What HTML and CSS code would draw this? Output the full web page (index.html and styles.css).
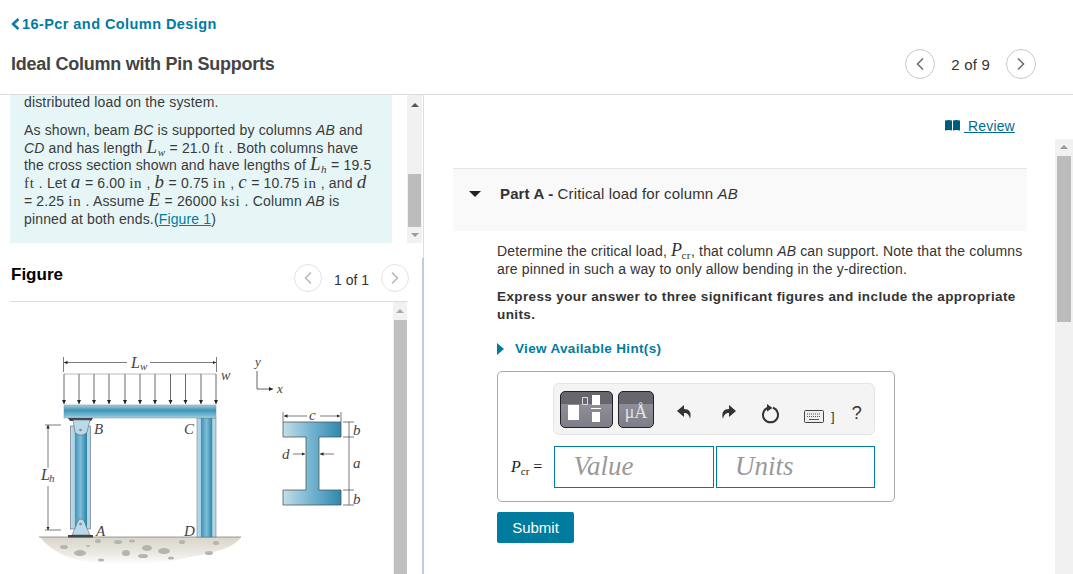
FILE: index.html
```html
<!DOCTYPE html>
<html lang="en">
<head>
<meta charset="utf-8">
<title>Ideal Column with Pin Supports</title>
<link rel="stylesheet" href="styles.css">
</head>
<body>
<div class="page">
  <header class="top">
    <a class="back"><svg class="back-ico" width="9" height="12" viewBox="0 0 9 12"><path d="M7.500 1 2 6l5.500 5" fill="none" stroke="#007c9f" stroke-width="2.400"/></svg>16-Pcr and Column Design</a>
    <div class="title-row">
      <h1>Ideal Column with Pin Supports</h1>
      <nav class="pager">
        <span class="circle"><svg width="10" height="14" viewBox="0 0 10 14"><path d="M8 1.500 2.500 7 8 12.500" fill="none" stroke="#666f7a" stroke-width="1.600"/></svg></span>
        <span class="count">2 of 9</span>
        <span class="circle"><svg width="10" height="14" viewBox="0 0 10 14"><path d="M2 1.500 7.500 7 2 12.500" fill="none" stroke="#666f7a" stroke-width="1.600"/></svg></span>
      </nav>
    </div>
  </header>
  <main class="main">
    <section class="left">
      <div class="intro">
        <div class="desc">
          <p class="first">distributed load on the system.</p>
          <p>As shown, beam <i>BC</i> is supported by columns <i>AB</i> and <i>CD</i> and has length <span class="m"><i>L</i><sub>w</sub></span> = 21.0 <span class="u">ft</span> . Both columns have the cross section shown and have lengths of <span class="m"><i>L</i><sub>h</sub></span> = 19.5 <span class="u">ft</span> . Let <span class="m"><i>a</i></span> = 6.00 <span class="u">in</span> , <span class="m"><i>b</i></span> = 0.75 <span class="u">in</span> , <span class="m"><i>c</i></span> = 10.75 <span class="u">in</span> , and <span class="m"><i>d</i></span> = 2.25 <span class="u">in</span> . Assume <span class="m"><i>E</i></span> = 26000 <span class="u">ksi</span> . Column <i>AB</i> is pinned at both ends.(<a class="lnk">Figure 1</a>)</p>
        </div>
        <div class="sbar sbar-intro">
          <span class="up"></span><span class="thumb"></span><span class="down"></span>
        </div>
      </div>
      <div class="fig-head">
        <h2>Figure</h2>
        <div class="fig-pager">
          <span class="circle soft"><svg width="10" height="14" viewBox="0 0 10 14"><path d="M8 1.500 2.500 7 8 12.500" fill="none" stroke="#b8b8b8" stroke-width="1.600"/></svg></span>
          <span class="count">1 of 1</span>
          <span class="circle soft"><svg width="10" height="14" viewBox="0 0 10 14"><path d="M2 1.500 7.500 7 2 12.500" fill="none" stroke="#b8b8b8" stroke-width="1.600"/></svg></span>
        </div>
      </div>
      <div class="fig-body">
        <svg class="diagram" width="383" height="272" viewBox="10 302 383 272">
          <defs>
            <linearGradient id="beam" x1="0" y1="0" x2="0" y2="1"><stop offset="0" stop-color="#a6d0e2"/><stop offset=".4" stop-color="#3e93b5"/><stop offset=".75" stop-color="#6fb3cf"/><stop offset="1" stop-color="#a9d3e4"/></linearGradient>
            <linearGradient id="col" x1="0" y1="0" x2="1" y2="0"><stop offset="0" stop-color="#bcdcea"/><stop offset=".2" stop-color="#a5d0e3"/><stop offset=".22" stop-color="#3f93b6"/><stop offset=".5" stop-color="#7dbdd6"/><stop offset=".8" stop-color="#2f86ab"/><stop offset=".82" stop-color="#b3d6e6"/><stop offset="1" stop-color="#b3d6e6"/></linearGradient>
            <linearGradient id="sec" x1="0" y1="0" x2="1" y2="0"><stop offset="0" stop-color="#c2dfeb"/><stop offset=".5" stop-color="#72b3cf"/><stop offset="1" stop-color="#2f88ad"/></linearGradient>
            <linearGradient id="gnd" x1="0" y1="0" x2="0" y2="1"><stop offset="0" stop-color="#d8d5ca"/><stop offset=".6" stop-color="#ebe9e2"/><stop offset="1" stop-color="#fff"/></linearGradient>
            <marker id="ah" markerWidth="6" markerHeight="6" refX="5" refY="2.500" orient="auto-start-reverse"><path d="M0 0 5 2.500 0 5z" fill="#222"/></marker>
          </defs>
          <g class="art">
            <path d="M40 537h201c-8 12-30 16-50 20-40 9-90 10-120 1-14-5-24-12-31-21z" fill="url(#gnd)"/>
            <g fill="#b4b4b0">
              <ellipse cx="80" cy="553" rx="6" ry="3"/><ellipse cx="64" cy="547" rx="4" ry="2"/><ellipse cx="98" cy="541" rx="3" ry="2"/><ellipse cx="118" cy="542" rx="4" ry="2"/><ellipse cx="126" cy="553" rx="4" ry="3"/><ellipse cx="147" cy="548" rx="5" ry="3"/><ellipse cx="164" cy="551" rx="6" ry="3"/><ellipse cx="143" cy="556" rx="5" ry="2"/><ellipse cx="182" cy="542" rx="3" ry="2"/><ellipse cx="209" cy="553" rx="4" ry="2"/><ellipse cx="216" cy="543" rx="3" ry="2"/><ellipse cx="101" cy="560" rx="3" ry="1.500"/><ellipse cx="171" cy="558" rx="3" ry="1.500"/><ellipse cx="132" cy="541" rx="3" ry="1.500"/><ellipse cx="88" cy="546" rx="2" ry="1"/>
            </g>
            <path d="M39 537h202" stroke="#777" stroke-width=".7"/>
            <rect x="197" y="418" width="19" height="119" fill="url(#col)" stroke="#667" stroke-width=".5"/>
            <rect x="70.500" y="426" width="20" height="103" fill="url(#col)" stroke="#667" stroke-width=".6"/>
            <rect x="64" y="405" width="152" height="13" fill="url(#beam)" stroke="#7b8f99" stroke-width=".5"/>
            <path d="M68 418h25l-2 3H70z" fill="#444"/>
            <path d="M73 420h17l-3 12q-2 3-5 3h-2q-3 0-5-3z" fill="#b9dbe9" stroke="#667" stroke-width=".6"/>
            <circle cx="80.500" cy="430" r="1.300" fill="#888"/>
            <path d="M72 535l4-9q2-7 5-7t5 7l4 9z" fill="#b9dbe9" stroke="#667" stroke-width=".6"/>
            <circle cx="80.500" cy="524" r="1.300" fill="#888"/>
            <rect x="68" y="535" width="25" height="2.500" fill="#444"/>
            <g stroke="#444" stroke-width=".7" fill="none">
              <path d="M63.500 357v15M216.500 357v15"/>
              <path d="M127 362.500H64" marker-end="url(#ah)"/>
              <path d="M150 362.500h66" marker-end="url(#ah)"/>
              <path d="M45 425h16M45 530h16"/>
              <path d="M48 468V425" marker-end="url(#ah)"/>
              <path d="M48 486v44" marker-end="url(#ah)"/>
            </g>
            <path d="M64 374h152" stroke="#aaa" stroke-width=".8"/>
            <g stroke="#444" stroke-width=".8">
              <path d="M64 374v30" marker-end="url(#ah)"/><path d="M79 374v30" marker-end="url(#ah)"/><path d="M94 374v30" marker-end="url(#ah)"/><path d="M109 374v30" marker-end="url(#ah)"/><path d="M125 374v30" marker-end="url(#ah)"/><path d="M140 374v30" marker-end="url(#ah)"/><path d="M155 374v30" marker-end="url(#ah)"/><path d="M170.500 374v30" marker-end="url(#ah)"/><path d="M185.500 374v30" marker-end="url(#ah)"/><path d="M201 374v30" marker-end="url(#ah)"/><path d="M216 374v30" marker-end="url(#ah)"/>
            </g>
            <path d="M257 371v18h16" fill="none" stroke="#555" stroke-width=".9" marker-end="url(#ah)"/>
            <path d="M283 422h58v15h-22v53h22v15h-58v-15h23v-53h-23z" fill="url(#sec)" stroke="#555" stroke-width=".8"/>
            <g stroke="#444" stroke-width=".7" fill="none">
              <path d="M283 412v10M341 412v10M343 422h11M343 437h11M343 490h11M343 505h11M349 422v83"/>
              <path d="M307 416h-23" marker-end="url(#ah)"/><path d="M320 416h20" marker-end="url(#ah)"/>
              <path d="M293 454h12" marker-end="url(#ah)"/><path d="M334 454h-14" marker-end="url(#ah)"/>
            </g>
          </g>
          <g class="dg-txt">
            <text x="131" y="368" font-size="16">L</text><text x="140" y="370" font-size="11">w</text>
            <text x="221" y="380" font-size="14">w</text>
            <text x="41" y="480" font-size="16">L</text><text x="49" y="482" font-size="11">h</text>
            <text x="94" y="434" font-size="15">B</text><text x="184" y="434" font-size="15">C</text>
            <text x="96" y="536" font-size="15">A</text><text x="184" y="536" font-size="15">D</text>
            <text x="255" y="366" font-size="13">y</text><text x="277" y="393" font-size="13">x</text>
            <text x="309" y="420" font-size="15">c</text><text x="282" y="459" font-size="15">d</text>
            <text x="353" y="435" font-size="15">b</text><text x="353" y="468" font-size="15">a</text><text x="353" y="504" font-size="15">b</text>
          </g>
        </svg>
        <div class="sbar sbar-fig">
          <span class="up"></span><span class="thumb"></span>
        </div>
      </div>
    </section>
    <section class="right">
      <div class="content">
        <a class="review"><svg width="15" height="11" viewBox="0 0 15 11"><path d="M0 .5q4-1 7 0v10q-3-1-7 0zM8 .5q3-1 7 0v10q-4-1-7 0z" fill="#005e7d"/></svg><span class="review-t">&nbsp;Review</span></a>
        <div class="part-head">
          <svg width="12" height="6" viewBox="0 0 12 6"><path d="M0 0h12L6 6z" fill="#222"/></svg>
          <p><b>Part A - </b>Critical load for column <i>AB</i></p>
        </div>
        <div class="part-body">
          <p>Determine the critical load, <span class="m"><i>P</i><sub class="cr">cr</sub></span>, that column <i>AB</i> can support. Note that the columns are pinned in such a way to only allow bending in the y-direction.</p>
          <p class="bold">Express your answer to three significant figures and include the appropriate units.</p>
          <a class="hint"><svg width="7" height="12" viewBox="0 0 7 12"><path d="M0 0l7 6-7 6z" fill="#007c9f"/></svg>View Available Hint(s)</a>
          <div class="answer">
            <div class="toolbar">
              <span class="tbtn tb1">
                <svg width="51" height="35" viewBox="1 1 51 35"><path d="M8 14h11v15H8z" fill="#fff"/><path d="M22.500 6.500h5v7h-5z" fill="none" stroke="#ddd"/><path d="M32 4h8v10h-8zM32 21h8v10h-8zM31 17h10v1H31z" fill="#fff"/></svg>
              </span>
              <span class="tbtn tb2">μÅ</span>
              <svg class="ti t-undo" width="18" height="18" viewBox="0 0 18 18"><path d="M8 2 1 8l7 6v-4c3 0 5 1 6 6 2-7-1-10-6-10z" fill="#333"/></svg>
              <svg class="ti t-redo" width="18" height="18" viewBox="0 0 18 18"><path d="M10 2l7 6-7 6v-4c-3 0-5 1-6 6-2-7 1-10 6-10z" fill="#333"/></svg>
              <svg class="ti t-reset" width="20" height="20" viewBox="0 0 20 20"><path d="M12 3.800a7.500 7.500 0 1 1-5 0" fill="none" stroke="#333" stroke-width="2"/><path d="M6 0v7.500l5.500-3.500z" fill="#333"/></svg>
              <svg class="ti t-kb" width="20" height="13" viewBox="0 0 20 13"><rect x=".5" y=".5" width="19" height="12" rx="1" fill="#eee" stroke="#444"/><path d="M3 4h14M3 6.500h14" stroke="#555" stroke-dasharray="1 1"/><path d="M5 9.500h10" stroke="#555"/></svg>
              <span class="brk">]</span>
              <span class="q">?</span>
            </div>
            <div class="entry">
              <span class="lab"><i>P</i><sub>cr</sub> =</span>
              <span class="field">Value</span>
              <span class="field f2">Units</span>
            </div>
          </div>
          <button class="submit">Submit</button>
        </div>
      </div>
      <div class="sbar sbar-main">
        <span class="up"></span><span class="thumb"></span>
      </div>
    </section>
  </main>
</div>
</body>
</html>
```
FILE: styles.css
```css
* { box-sizing: border-box; }
html, body { margin: 0; padding: 0; height: 100%; overflow: hidden; background: #fff; }
body { font-family: "Liberation Sans", Arial, sans-serif; font-size: 14px; color: #333; letter-spacing: .15px; }
.page { width: 100%; height: 574px; display: flex; flex-direction: column; }

.top { height: 95px; border-bottom: 1px solid #ddd; padding: 15px 37px 0 11px; flex: none; }
.back { display: flex; align-items: center; gap: 2px; color: #007c9f; font-weight: bold; font-size: 14.500px; line-height: 18px; letter-spacing: .43px; }
.title-row { display: flex; justify-content: space-between; align-items: center; margin-top: 15px; height: 32px; }
h1 { margin: 0; font-size: 18px; font-weight: bold; color: #444; letter-spacing: -.25px; }
.pager { display: flex; align-items: center; gap: 16px; }
.circle { width: 30px; height: 30px; border: 1px solid #c8c8c8; border-radius: 50%; display: flex; align-items: center; justify-content: center; background: #fff; }
.circle.soft { width: 28px; height: 28px; border-color: #e3e3e3; }
.count { font-size: 15px; color: #333; letter-spacing: .2px; }
.fig-pager .count { font-size: 14px; letter-spacing: 0; }

.main { flex: 1; display: flex; min-height: 0; }
.left { width: 424px; flex: none; background: linear-gradient(#ddd, #ddd) right top / 1px 163px no-repeat, linear-gradient(#b9cde4, #b9cde4) right bottom / 2px 316px no-repeat; display: flex; flex-direction: column; }
.intro { display: flex; height: 148px; flex: none; padding-left: 10px; }
.desc { width: 382px; background: #e6f6f7; padding: 0 17px 0 14px; line-height: 17.800px; overflow: hidden; flex: none; color: #3a3a3a; }
.desc p { margin: 0; }
.desc .first { margin-top: -1px; margin-bottom: 10px; }
.m { font-family: "Liberation Serif", serif; font-size: 19px; line-height: 0; letter-spacing: .5px; }
.m sub { font-size: 11px; line-height: 0; font-style: italic; vertical-align: -3px; }
.m sub.cr { font-style: normal; margin-left: -1px; }
.u { font-family: "Liberation Serif", serif; font-size: 15px; line-height: 0; letter-spacing: .8px; }
.lnk { color: #007c9f; text-decoration: underline; }

.sbar { background: #f1f1f1; display: flex; flex-direction: column; align-items: center; flex: none; }
.up, .down { width: 0; height: 0; border-left: 4px solid transparent; border-right: 4px solid transparent; flex: none; }
.up { border-bottom: 4px solid #555; }
.down { border-top: 4px solid #9a9a9a; }
.thumb { background: #bcbcbc; display: block; flex: none; }
.sbar-intro { width: 15px; margin-left: 15px; }
.sbar-intro .up { margin-top: 8px; }
.sbar-intro .thumb { width: 13px; height: 53px; margin-top: 67px; }
.sbar-intro .down { margin-top: 6px; }

.fig-head { height: 59px; flex: none; margin: 0 16px 0 10px; border-bottom: 1px solid #ddd; display: flex; justify-content: space-between; padding-top: 21px; }
h2 { margin: 0 0 0 1px; font-size: 17px; line-height: 22px; color: #000; font-weight: bold; letter-spacing: 0; }
.fig-pager { display: flex; align-items: center; gap: 12px; height: 30px; margin-top: -1px; }
.fig-pager .count { margin-top: 4px; }
.fig-pager .circle:last-child { margin-right: -1px; }

.fig-body { flex: 1; display: flex; min-height: 0; padding-left: 10px; overflow: hidden; }
.diagram { display: block; flex: none; }
.art { filter: blur(.35px); }
.dg-txt text { font-family: "Liberation Serif", serif; font-style: italic; fill: #444; letter-spacing: 0; }
.sbar-fig { width: 14px; height: 272px; }
.sbar-fig .up { margin-top: 7px; border-bottom-color: #aaa; }
.sbar-fig .thumb { width: 13px; height: 254px; margin-top: 7px; background: #c0c0c0; }

.right { flex: 1; display: flex; min-width: 0; }
.content { width: 631px; flex: none; display: flex; flex-direction: column; align-items: flex-start; }
.review { margin: 22px 0 0 521px; color: #007c9f; display: flex; align-items: center; height: 17px; flex: none; }
.review svg { flex: none; }
.review-t { text-decoration: underline; color: #006d8f; margin-left: 4px; }
.part-head { margin: 34px 0 0 29px; width: 574px; height: 63px; background: #f9f9f9; border-top: 1px solid #e5e5e5; display: flex; align-items: flex-start; padding: 22px 0 0 16px; gap: 19px; flex: none; }
.part-head p { margin: -6px 0 0; line-height: 18px; color: #333; font-size: 15px; letter-spacing: .13px; }
.part-body { margin-left: 73px; width: 530px; flex: none; padding-top: 11px; }
.part-body p { margin: 0; line-height: 18px; }
.part-body .m { font-size: 18px; }
.part-body .m sub { font-size: 11px; }
.part-body .bold { font-weight: bold; margin-top: 10px; line-height: 17.500px; font-size: 13.500px; letter-spacing: .38px; color: #333; }
.hint { display: flex; align-items: center; gap: 11px; margin-top: 18px; color: #007c9f; font-weight: bold; font-size: 13.500px; letter-spacing: .33px; line-height: 16px; }
.answer { width: 398px; height: 131px; margin-top: 14px; border: 1px solid #aaa; border-radius: 5px; padding: 11px 0 0 55px; }
.toolbar { width: 322px; height: 52px; background: #f4f4f4; border: 1px solid #e4e4e4; border-radius: 6px; display: flex; align-items: flex-start; padding: 7px 0 0 6px; color: #333; }
.tbtn { height: 37px; border: 1px solid #222; border-radius: 5px; background: linear-gradient(#66666c 0, #66666c 34%, #8e8e98 34%, #7e7e88 100%); display: flex; align-items: center; justify-content: center; flex: none; }
.tb1 { width: 53px; }
.tb2 { width: 36px; margin-left: 5px; color: #e4e4e4; font-family: "Liberation Serif", serif; font-size: 18px; line-height: 30px; padding-top: 4px; letter-spacing: 0; }
.ti { flex: none; }
.t-undo { margin: 12px 0 0 22px; }
.t-redo { margin: 12px 0 0 25px; }
.t-reset { margin: 13px 0 0 24px; }
.t-kb { margin: 19px 0 0 23px; }
.brk { font-size: 13px; margin: 18px 0 0 7px; font-weight: normal; }
.q { font-size: 18px; margin: 12px 0 0 17px; letter-spacing: 0; }
.entry { display: flex; align-items: center; margin: 11px 0 0 -42px; height: 42px; }
.lab { width: 43px; font-family: "Liberation Serif", serif; font-size: 16px; color: #222; white-space: nowrap; flex: none; letter-spacing: 0; }
.lab sub { font-size: 11px; line-height: 0; vertical-align: -3px; }
.field { width: 160px; height: 42px; border: 1px solid #007c9f; font-family: "Liberation Serif", serif; font-style: italic; font-size: 27px; line-height: 38px; color: #999; padding-left: 18.500px; flex: none; letter-spacing: 0; }
.f2 { margin-left: 2px; width: 159px; padding-left: 18px; }
.submit { display: block; margin-top: 10px; width: 77px; height: 31px; background: #007c9f; color: #fff; border: 0; border-radius: 2px; font: 15px "Liberation Sans", Arial, sans-serif; padding: 0; }

.sbar-main { width: 18px; height: 435px; margin: 44px 0 0 0; overflow: hidden; }
.sbar-main .up { margin-top: 6px; border-bottom-color: #999; }
.sbar-main .thumb { width: 14px; height: 166px; margin-top: 7px; }
```
